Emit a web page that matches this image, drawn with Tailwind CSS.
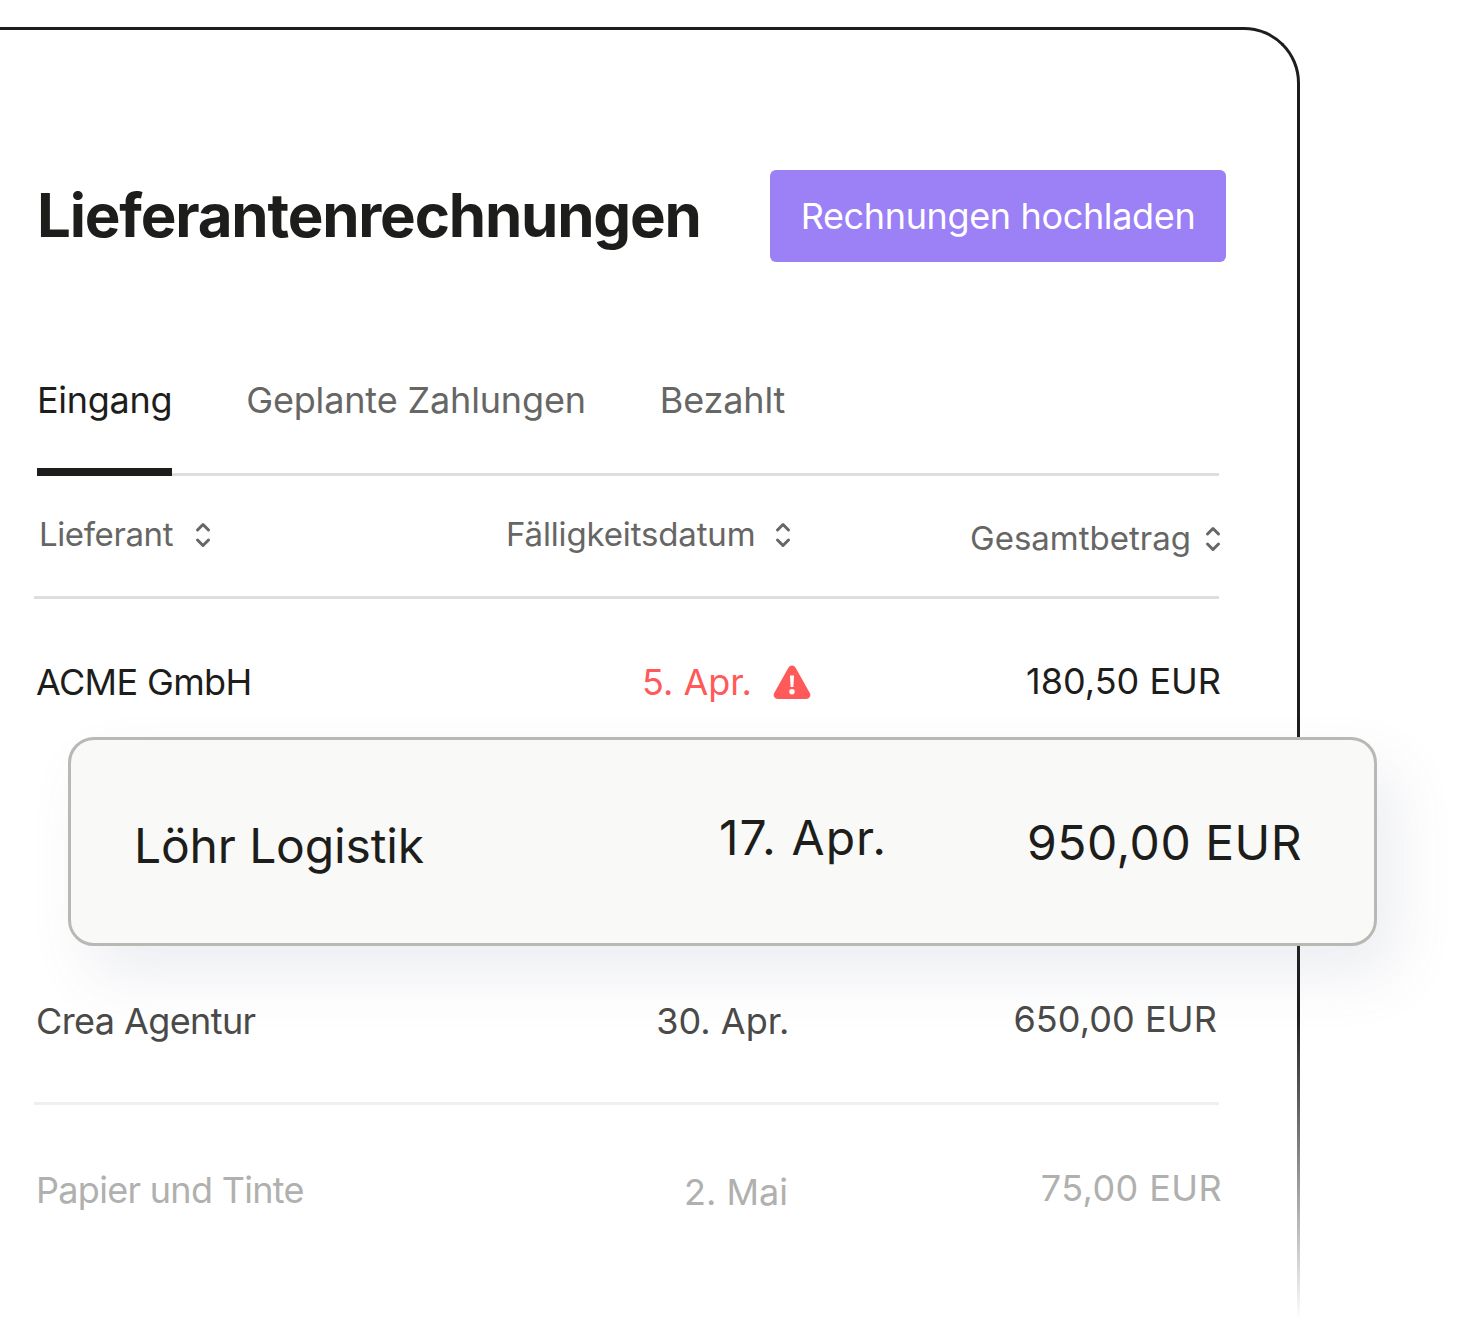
<!DOCTYPE html>
<html lang="de">

<head>
  <meta charset="UTF-8">
  <title>Lieferantenrechnungen</title>
  <script src="https://cdn.jsdelivr.net/npm/@tailwindcss/browser@4"></script>
</head>

<body class="bg-white text-[#1d1d1b] font-['Inter',sans-serif]">

  <div class="relative w-[1458px] h-[1320px] overflow-hidden pt-[27px]">
    <main class="relative ml-[-60px] w-[1360px] h-[1293px] border-t-[3px] border-r-[3px] border-[#1d1d1b] rounded-tr-[56px] pl-[97px]">

      <!-- fade out of the frame's right edge -->
      <div class="absolute right-[-4px] top-[983px] bottom-0 w-[6px] bg-gradient-to-b from-white/0 to-white"></div>

      <header class="flex items-center justify-between w-[1189px] mt-[140px] h-[92px]">
        <h1 class="text-[60px] font-[650] tracking-[-1.2px] leading-none mb-[3px]">Lieferantenrechnungen</h1>
        <button class="w-[456px] h-[92px] bg-[#9b80f6] text-white text-[36px] tracking-[-0.35px] rounded-md">Rechnungen hochladen</button>
      </header>

      <nav class="flex gap-[74px] w-[1182px] mt-[110px] h-[104px] border-b-[3px] border-[#dededa] text-[36px] tracking-[-0.15px] leading-[56px] text-[#666664]">
        <a class="relative h-[101px] text-[#1d1d1b] tracking-[-0.3px]">Eingang<span class="absolute left-0 right-0 bottom-[-3px] h-[8px] bg-[#1d1d1b]"></span></a>
        <a>Geplante Zahlungen</a>
        <a>Bezahlt</a>
      </nav>

      <div class="ml-[-3px] w-[1185px] h-[123px] border-b-[3px] border-[#dededa] grid grid-cols-[472px_295px_1fr] items-center text-[33px] text-[#666664]">
        <div class="flex items-center gap-[22px] pl-[5px] pb-[2px] tracking-[-0.4px]">Lieferant
          <svg class="w-[16px] h-[28px] shrink-0" viewBox="0 0 16 28" fill="none" stroke="#666664" stroke-width="3" stroke-linecap="round" stroke-linejoin="round"><path d="M2.500 9 8 3.500 13.500 9M2.500 19 8 24.500 13.500 19"/></svg>
        </div>
        <div class="flex items-center gap-[20px] pb-[2px] tracking-[-0.15px]">Fälligkeitsdatum
          <svg class="w-[16px] h-[28px] shrink-0" viewBox="0 0 16 28" fill="none" stroke="#666664" stroke-width="3" stroke-linecap="round" stroke-linejoin="round"><path d="M2.500 9 8 3.500 13.500 9M2.500 19 8 24.500 13.500 19"/></svg>
        </div>
        <div class="flex items-center justify-end gap-[14px] pt-[6px] mr-[-2px]">Gesamtbetrag
          <svg class="w-[16px] h-[28px] shrink-0" viewBox="0 0 16 28" fill="none" stroke="#666664" stroke-width="3" stroke-linecap="round" stroke-linejoin="round"><path d="M2.500 9 8 3.500 13.500 9M2.500 19 8 24.500 13.500 19"/></svg>
        </div>
      </div>

      <div class="w-[1185px] h-[169px] grid grid-cols-[1fr_auto] items-center text-[36px] relative">
        <span class="ml-[-1px] pb-[4px] tracking-[-0.65px]">ACME GmbH</span>
        <span class="mr-[1px] pb-[6px]">180,50 EUR</span>
        <span class="absolute left-[605px] top-[56px] flex items-center gap-[21px] text-[#ff5a5a]">5. Apr.
          <svg class="w-[38px] h-[34px]" viewBox="0 0 38 34"><path fill="#ff5a5a" fill-rule="evenodd" d="M15.500 2.500a4 4 0 0 1 7 0l14.300 25.500a4 4 0 0 1-3.500 6H4.700a4 4 0 0 1-3.500-6ZM17 10.500h4l-.6 11.500h-2.800ZM19 24a2.700 2.700 0 1 1 0 5.400 2.700 2.700 0 0 1 0-5.400Z"/></svg>
        </span>
      </div>

      <div class="h-[170px]"></div>

      <div class="ml-[-3px] w-[1185px] h-[167px] pt-[2px] border-b-[3px] border-[#efefec] grid grid-cols-[3px_1fr_auto_auto] items-center text-[36px] text-[#4a4a48]">
        <span></span>
        <span class="ml-[-1px] tracking-[-0.6px]">Crea Agentur</span>
        <span class="mr-[224px]">30. Apr.</span>
        <span class="mr-[2px] pb-[4px] tracking-[0.1px]">650,00 EUR</span>
      </div>

      <div class="w-[1185px] h-[170px] grid grid-cols-[1fr_auto_auto] items-center text-[36px] text-[#b0b0ae]">
        <span class="ml-[-1px] tracking-[-0.7px]">Papier und Tinte</span>
        <span class="mr-[253px] pt-[4px]">2. Mai</span>
        <span class="pb-[4px] tracking-[0.4px]">75,00 EUR</span>
      </div>
    </main>

    <!-- floating row -->
    <div class="absolute left-[68px] top-[737px] w-[1309px] h-[209px] rounded-[26px] border-[3px] border-[#b8b8b4] bg-[#f9f9f7] shadow-[20px_30px_60px_rgba(90,100,140,0.11)] flex items-center">
      <span class="absolute left-[63px] top-[82px] text-[48px] tracking-[-0.15px] leading-none">Löhr Logistik</span>
      <span class="absolute left-[648px] top-[74px] text-[48px] tracking-[1.1px] leading-none">17. Apr.</span>
      <span class="absolute left-[956px] top-[79px] text-[48px] tracking-[0.5px] leading-none">950,00 EUR</span>
    </div>
  </div>

</body>

</html>
